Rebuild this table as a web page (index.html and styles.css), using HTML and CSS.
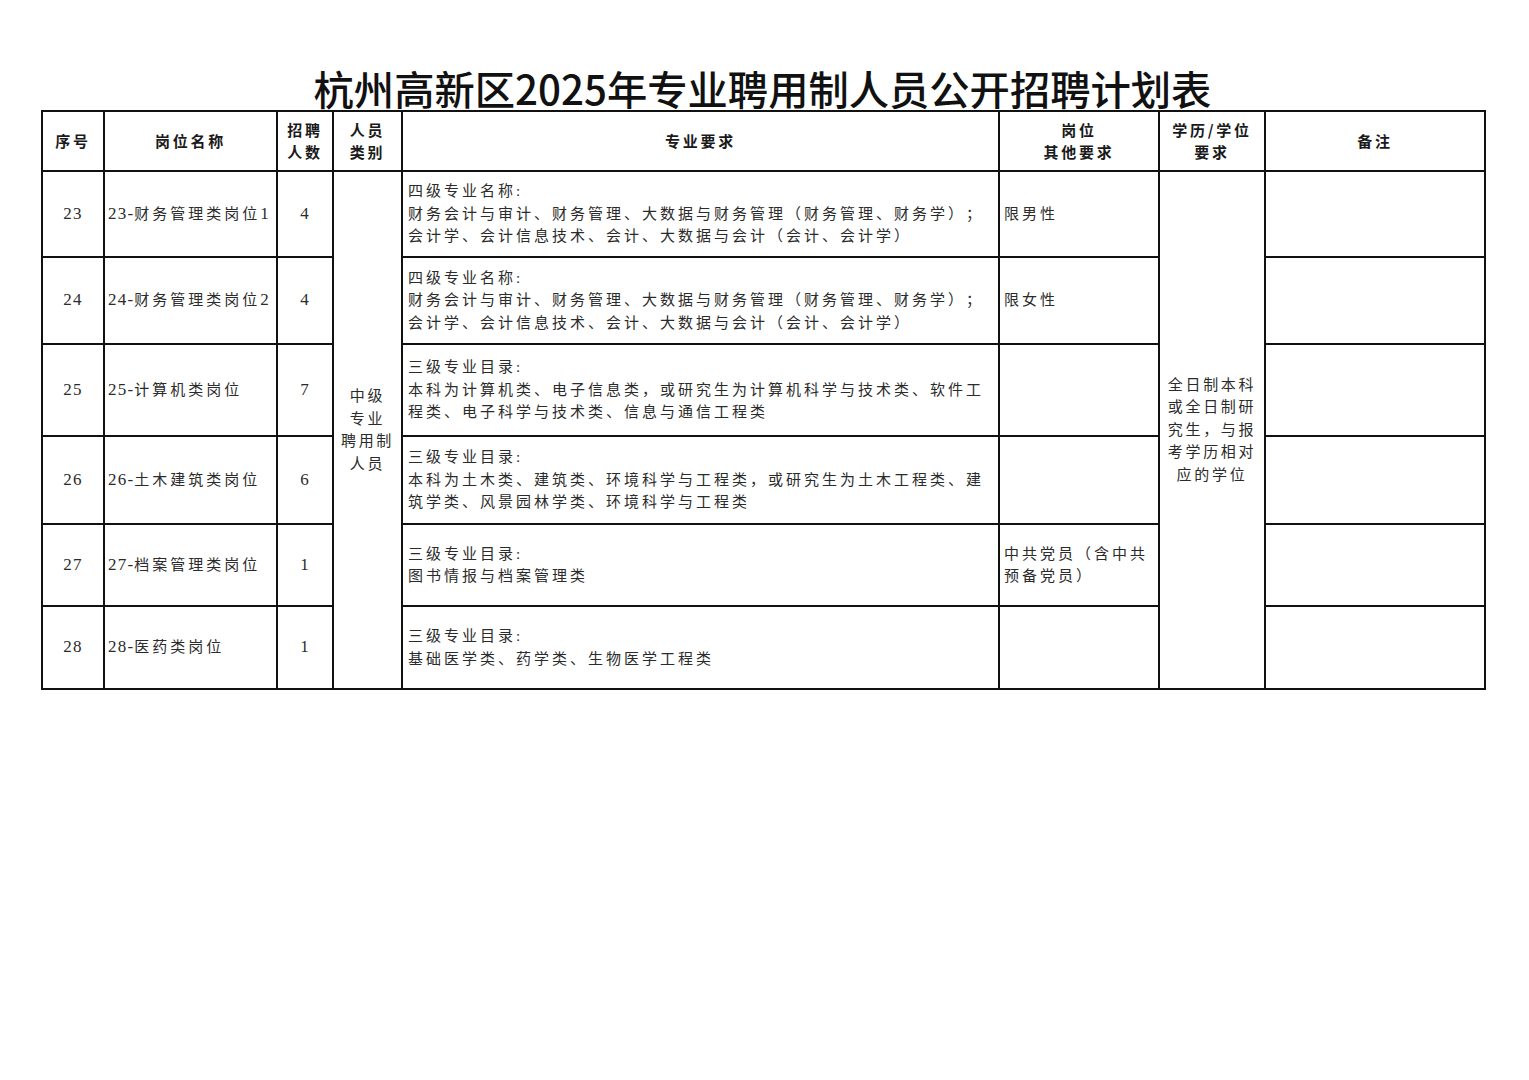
FILE: index.html
```html
<!DOCTYPE html>
<html lang="zh-CN">
<head>
<meta charset="utf-8">
<title>杭州高新区2025年专业聘用制人员公开招聘计划表</title>
<link rel="stylesheet" href="styles.css">
</head>
<body>
<div class="page">
  <h1 class="title">杭州高新区2025年专业聘用制人员公开招聘计划表</h1>
  <table class="plan">
    <colgroup>
      <col class="w-no">
      <col class="w-name">
      <col class="w-count">
      <col class="w-type">
      <col class="w-major">
      <col class="w-other">
      <col class="w-edu">
      <col class="w-note">
    </colgroup>
    <thead>
      <tr class="head-row">
        <th>序号</th>
        <th>岗位名称</th>
        <th>招聘<br>人数</th>
        <th>人员<br>类别</th>
        <th>专业要求</th>
        <th>岗位<br>其他要求</th>
        <th>学历/学位<br>要求</th>
        <th>备注</th>
      </tr>
    </thead>
    <tbody>
      <tr class="r23">
        <td class="c-center"><span class="num">23</span></td>
        <td class="c-name"><span class="num">23-</span>财务管理类岗位<span class="num">1</span></td>
        <td class="c-center"><span class="num">4</span></td>
        <td class="c-type" rowspan="6">中级<br>专业<br>聘用制<br>人员</td>
        <td class="c-major">四级专业名称:<br>财务会计与审计、财务管理、大数据与财务管理（财务管理、财务学）；<br>会计学、会计信息技术、会计、大数据与会计（会计、会计学）</td>
        <td class="c-other">限男性</td>
        <td class="c-edu" rowspan="6">全日制本科<br>或全日制研<br>究生，与报<br>考学历相对<br>应的学位</td>
        <td class="c-note"></td>
      </tr>
      <tr class="r24">
        <td class="c-center"><span class="num">24</span></td>
        <td class="c-name"><span class="num">24-</span>财务管理类岗位<span class="num">2</span></td>
        <td class="c-center"><span class="num">4</span></td>
        <td class="c-major">四级专业名称:<br>财务会计与审计、财务管理、大数据与财务管理（财务管理、财务学）；<br>会计学、会计信息技术、会计、大数据与会计（会计、会计学）</td>
        <td class="c-other">限女性</td>
        <td class="c-note"></td>
      </tr>
      <tr class="r25">
        <td class="c-center"><span class="num">25</span></td>
        <td class="c-name"><span class="num">25-</span>计算机类岗位</td>
        <td class="c-center"><span class="num">7</span></td>
        <td class="c-major">三级专业目录:<br>本科为计算机类、电子信息类，或研究生为计算机科学与技术类、软件工<br>程类、电子科学与技术类、信息与通信工程类</td>
        <td class="c-other"></td>
        <td class="c-note"></td>
      </tr>
      <tr class="r26">
        <td class="c-center"><span class="num">26</span></td>
        <td class="c-name"><span class="num">26-</span>土木建筑类岗位</td>
        <td class="c-center"><span class="num">6</span></td>
        <td class="c-major">三级专业目录:<br>本科为土木类、建筑类、环境科学与工程类，或研究生为土木工程类、建<br>筑学类、风景园林学类、环境科学与工程类</td>
        <td class="c-other"></td>
        <td class="c-note"></td>
      </tr>
      <tr class="r27">
        <td class="c-center"><span class="num">27</span></td>
        <td class="c-name"><span class="num">27-</span>档案管理类岗位</td>
        <td class="c-center"><span class="num">1</span></td>
        <td class="c-major">三级专业目录:<br>图书情报与档案管理类</td>
        <td class="c-other">中共党员（含中共<br>预备党员）</td>
        <td class="c-note"></td>
      </tr>
      <tr class="r28">
        <td class="c-center"><span class="num">28</span></td>
        <td class="c-name"><span class="num">28-</span>医药类岗位</td>
        <td class="c-center"><span class="num">1</span></td>
        <td class="c-major">三级专业目录:<br>基础医学类、药学类、生物医学工程类</td>
        <td class="c-other"></td>
        <td class="c-note"></td>
      </tr>
    </tbody>
  </table>
</div>
</body>
</html>
```

FILE: styles.css
```css
html, body {
  margin: 0;
  padding: 0;
  background: #ffffff;
}

.page {
  width: 1443px;
  margin-left: 41px;
  padding-top: 66px;
}

.title {
  margin: 0;
  height: 44px;
  line-height: 44px;
  text-align: center;
  font-family: "Noto Sans CJK SC", sans-serif;
  font-weight: 500;
  font-size: 40.3px;
  color: #111111;
  letter-spacing: 0;
}

.plan {
  width: 1443px;
  table-layout: fixed;
  border-collapse: collapse;
  font-family: "Liberation Serif", "Noto Sans CJK SC", serif;
  font-size: 15px;
  line-height: 22.5px;
  letter-spacing: 3px;
  color: #2b2b2b;
  text-spacing-trim: space-all;
}

.w-no { width: 62px; }
.w-name { width: 173px; }
.w-count { width: 56px; }
.w-type { width: 69px; }
.w-major { width: 597px; }
.w-other { width: 160px; }
.w-edu { width: 106px; }
.w-note { width: 220px; }

.plan th,
.plan td {
  border: 2px solid #111111;
  padding: 0 4px;
  vertical-align: middle;
  overflow: hidden;
}

.plan th {
  font-family: "Noto Sans CJK SC", sans-serif;
  font-weight: 700;
  font-size: 15px;
  line-height: 22px;
  letter-spacing: 2.7px;
  color: #1a1a1a;
  text-align: center;
  padding: 0 2px;
}

.head-row { height: 60px; }
.r23 { height: 86px; }
.r24 { height: 87px; }
.r25 { height: 92px; }
.r26 { height: 88px; }
.r27 { height: 82px; }
.r28 { height: 83px; }

.num {
  font-size: 17px;
  letter-spacing: 1.2px;
}

.c-center {
  text-align: center;
}

.plan td.c-name {
  text-align: left;
  padding-left: 3px;
  white-space: nowrap;
}

.plan td.c-type,
.plan td.c-edu {
  text-align: center;
  padding: 0 2px;
  letter-spacing: 2.7px;
}

.plan td.c-major {
  text-align: left;
  padding-left: 5px;
  white-space: nowrap;
}

.plan td.c-other {
  text-align: left;
  padding-left: 4px;
  white-space: nowrap;
}
```
